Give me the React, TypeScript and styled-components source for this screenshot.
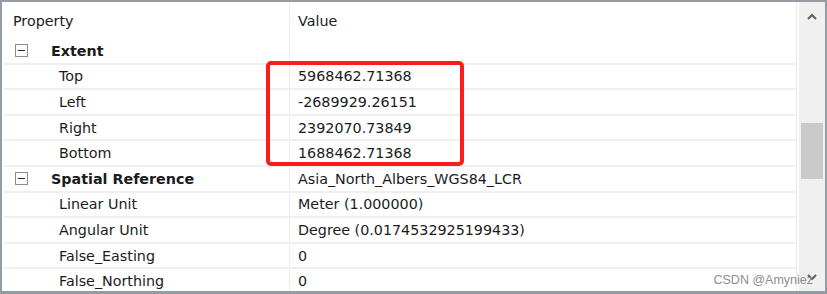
import styled, { createGlobalStyle } from "styled-components";

const GlobalStyle = createGlobalStyle`
  html, body {
    margin: 0;
    padding: 0;
    background: #ffffff;
  }
`;

interface PropRow {
  label: string;
  value?: string;
  group?: boolean;
}

const rows: PropRow[] = [
  { label: "Extent", group: true },
  { label: "Top", value: "5968462.71368" },
  { label: "Left", value: "-2689929.26151" },
  { label: "Right", value: "2392070.73849" },
  { label: "Bottom", value: "1688462.71368" },
  { label: "Spatial Reference", value: "Asia_North_Albers_WGS84_LCR", group: true },
  { label: "Linear Unit", value: "Meter (1.000000)" },
  { label: "Angular Unit", value: "Degree (0.0174532925199433)" },
  { label: "False_Easting", value: "0" },
  { label: "False_Northing", value: "0" },
];

const App = () => {
  return (
    <>
      <GlobalStyle />
      <Frame>
        <Grid>
          <HeaderRow>
            <HeaderCell className="name">Property</HeaderCell>
            <HeaderCell className="value">Value</HeaderCell>
          </HeaderRow>
          {rows.map((row) => (
            <Row key={row.label}>
              <NameCell $group={row.group}>
                {row.group && (
                  <Expander>
                    <span />
                  </Expander>
                )}
                {row.label}
              </NameCell>
              <ValueCell>{row.value}</ValueCell>
            </Row>
          ))}
        </Grid>
        <ScrollBar>
          <Arrow>
            <svg width="10" height="7" viewBox="0 0 10 7">
              <path d="M1 6 L5 2 L9 6" fill="none" stroke="#5f5f5f" strokeWidth="2" />
            </svg>
          </Arrow>
          <Track>
            <Thumb />
          </Track>
          <Arrow>
            <svg width="10" height="7" viewBox="0 0 10 7">
              <path d="M1 1 L5 5 L9 1" fill="none" stroke="#5f5f5f" strokeWidth="2" />
            </svg>
          </Arrow>
        </ScrollBar>
        <Highlight />
        <Watermark>CSDN @Amyniez</Watermark>
      </Frame>
    </>
  );
};

const Frame = styled.div`
  position: relative;
  width: 827px;
  height: 294px;
  box-sizing: border-box;
  border: 2px solid #959ba3;
  border-bottom-width: 3px;
  display: flex;
  overflow: hidden;
  background: #ffffff;
  font-family: "DejaVu Sans", Verdana, sans-serif;
  font-size: 14.3px;
  color: #1b1b1b;
`;

const Grid = styled.div`
  width: 794px;
  display: flex;
  flex-direction: column;
  border-right: 1px solid #ececec;
  flex-shrink: 0;
`;

const HeaderRow = styled.div`
  height: 37px;
  display: grid;
  grid-template-columns: 288px 1fr;
  flex-shrink: 0;

  .name {
    padding-left: 11px;
    border-right: 1px solid #ececec;
  }

  .value {
    padding-left: 8px;
  }
`;

const HeaderCell = styled.div`
  display: flex;
  align-items: center;
`;

const Row = styled.div`
  height: 25.6px;
  flex-shrink: 0;
  box-sizing: border-box;
  display: grid;
  grid-template-columns: 286px 1fr;
  margin-left: 2px;
  border-bottom: 2px solid #f0f0f0;
`;

const NameCell = styled.div<{ $group?: boolean }>`
  display: flex;
  align-items: center;
  padding-left: ${(p) => (p.$group ? "11px" : "55px")};
  font-weight: ${(p) => (p.$group ? 700 : 400)};
  border-right: 1px solid #ececec;
  white-space: nowrap;
`;

const Expander = styled.div`
  width: 13px;
  height: 13px;
  box-sizing: border-box;
  border: 1px solid #8c8c8c;
  margin-right: 23px;
  display: flex;
  align-items: center;
  justify-content: center;

  span {
    width: 7px;
    height: 1px;
    background: #2c2c2c;
  }
`;

const ValueCell = styled.div`
  display: flex;
  align-items: center;
  padding-left: 8px;
  white-space: nowrap;
`;

const ScrollBar = styled.div`
  margin-left: 2px;
  flex: 1;
  background: #f0f0f0;
  display: flex;
  flex-direction: column;
  align-items: center;
`;

const Arrow = styled.div`
  height: 28px;
  width: 100%;
  display: flex;
  align-items: center;
  justify-content: center;
`;

const Track = styled.div`
  flex: 1;
  width: 100%;
  padding: 93px 2px 0;
  box-sizing: border-box;
`;

const Thumb = styled.div`
  height: 56px;
  background: #c9c9c9;
`;

const Highlight = styled.div`
  position: absolute;
  left: 264px;
  top: 59px;
  width: 198px;
  height: 105px;
  box-sizing: border-box;
  border: 4px solid #fb1d1a;
  border-radius: 5px;
  pointer-events: none;
`;

const Watermark = styled.div`
  position: absolute;
  right: 12px;
  bottom: 4px;
  font-family: "Liberation Sans", Arial, sans-serif;
  font-size: 12.5px;
  color: #8e8e8e;
`;

export default App;
